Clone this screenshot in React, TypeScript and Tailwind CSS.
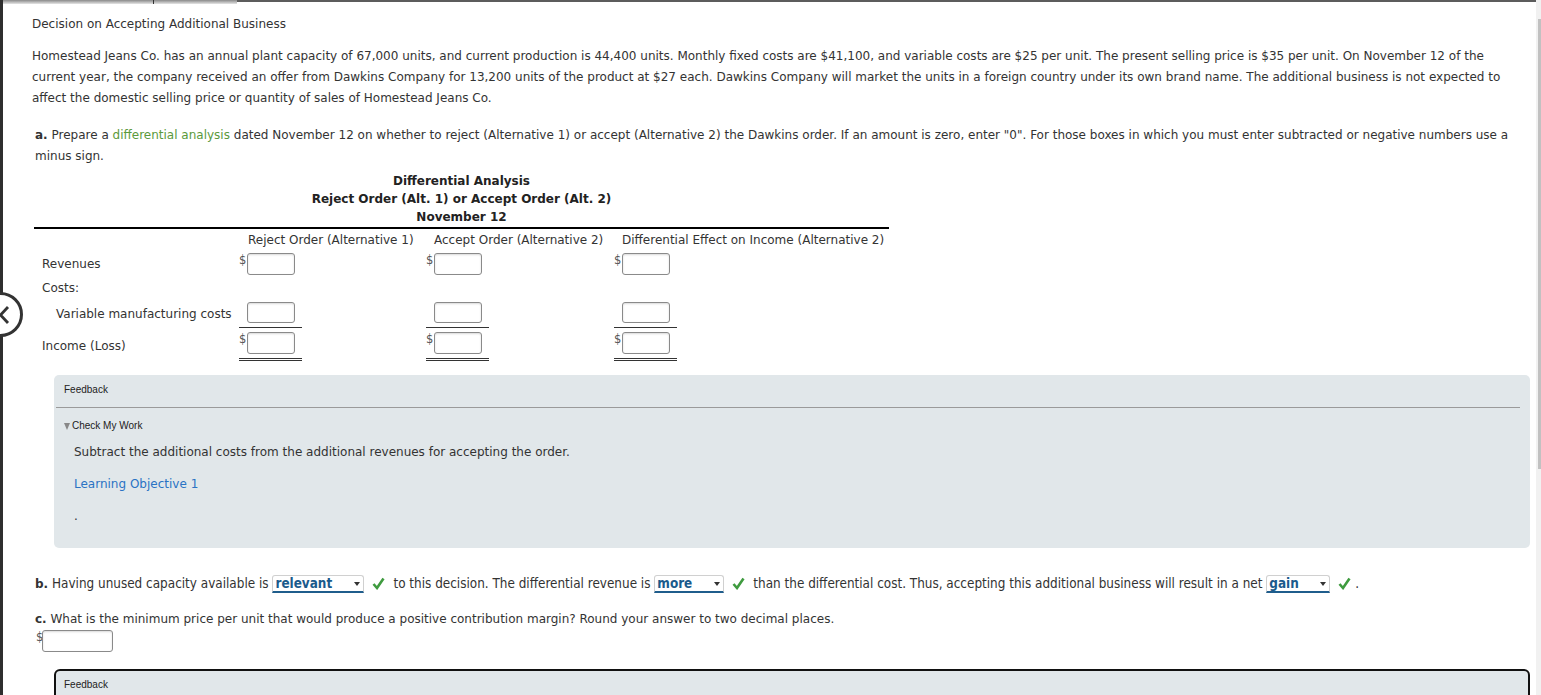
import React from "react";

const DollarInput = ({ w = "w-[48px]" }: { w?: string }) => (
  <div className="flex items-start">
    <span className="w-[8px] pt-[1px] text-[11.5px] leading-[12px] text-[#555]">$</span>
    <div className={`${w} h-[22px] rounded-[3px] border border-[#8a8a8a] bg-white shadow-[inset_0_1px_2px_rgba(0,0,0,0.15)]`} />
  </div>
);

const PlainInput = () => (
  <div className="flex items-start">
    <span className="w-[8px]" />
    <div className="h-[21px] w-[48px] rounded-[3px] border border-[#8a8a8a] bg-white shadow-[inset_0_1px_2px_rgba(0,0,0,0.15)]" />
  </div>
);

const Check = () => (
  <svg className="mx-[8px] inline-block align-[-2px]" width="13" height="13" viewBox="0 0 13 13">
    <path d="M1.5 7 L5 11 L11.5 1.5" fill="none" stroke="#3f9b3f" strokeWidth="2.6" />
  </svg>
);

const Dropdown = ({ label, w }: { label: string; w: string }) => (
  <span
    className={`relative inline-block ${w} h-[18px] rounded-t-[3px] border border-[#d0d0d0] border-b-2 border-b-[#1f5d8c] bg-white pl-[2px] align-baseline text-[13.4px] font-bold leading-[15px] text-[#1a5a8c]`}
  >
    {label}
    <span className="absolute right-[3px] top-[6px] h-0 w-0 border-x-[3px] border-t-[4px] border-x-transparent border-t-[#333]" />
  </span>
);

export default function App() {
  const valueCols = ["col1", "col2", "col3"];

  return (
    <div className="relative h-[695px] w-[1541px] overflow-hidden bg-white font-['DejaVu_Sans',sans-serif] text-[12px] text-[#333]">
      <div className="flex h-full">
        <div className="w-[3px] shrink-0 bg-[#2e2e2e]" />

        <div className="flex min-w-0 flex-1 flex-col">
          <div className="h-[2px] shrink-0 bg-[#5c5c5c]" />

          <main className="pl-[29px] pr-[6px]">
            {/* heading + problem text */}
            <h1 className="pt-[12px] leading-[21px]">Decision on Accepting Additional Business</h1>
            <p className="mt-[11px] leading-[21px]">
              Homestead Jeans Co. has an annual plant capacity of 67,000 units, and current production is 44,400 units. Monthly
              fixed costs are $41,100, and variable costs are $25 per unit. The present selling price is $35 per unit. On
              November 12 of the current year, the company received an offer from Dawkins Company for 13,200 units of the
              product at $27 each. Dawkins Company will market the units in a foreign country under its own brand name. The
              additional business is not expected to affect the domestic selling price or quantity of sales of Homestead
              Jeans Co.
            </p>
            <p className="mt-[16px] pl-[3px] leading-[21px]">
              <b>a.</b> Prepare a <span className="text-[#5b9a3c]">differential analysis</span> dated November 12 on whether
              to reject (Alternative 1) or accept (Alternative 2) the Dawkins order. If an amount is zero, enter "0". For
              those boxes in which you must enter subtracted or negative numbers use a minus sign.
            </p>

            {/* differential analysis table */}
            <div className="ml-[2px] mt-[5px] w-[855px]">
              <div className="text-center font-bold leading-[18px] text-[#222]">
                <div>Differential Analysis</div>
                <div>Reject Order (Alt. 1) or Accept Order (Alt. 2)</div>
                <div>November 12</div>
              </div>
              <div className="mt-[1px] border-t-2 border-black" />

              <div className="grid grid-cols-[205px_187px_188px_275px]">
                <div className="h-[22px]" />
                <div className="flex h-[22px] items-center whitespace-nowrap pl-[9px]">Reject Order (Alternative 1)</div>
                <div className="flex h-[22px] items-center whitespace-nowrap pl-[8px]">Accept Order (Alternative 2)</div>
                <div className="flex h-[22px] items-center whitespace-nowrap pl-[8px]">
                  Differential Effect on Income (Alternative 2)
                </div>

                <div className="flex h-[26px] items-center pl-[8px]">Revenues</div>
                {valueCols.map((c) => (
                  <div key={`rev-${c}`} className="pt-[2px]">
                    <DollarInput />
                  </div>
                ))}

                <div className="flex h-[22px] items-center pl-[8px]">Costs:</div>
                <div />
                <div />
                <div />

                <div className="flex h-[29px] items-center whitespace-nowrap pl-[22px]">Variable manufacturing costs</div>
                {valueCols.map((c) => (
                  <div key={`var-${c}`}>
                    <div className="w-[63px] border-b border-[#333] pb-[4px] pt-[3px]">
                      <PlainInput />
                    </div>
                  </div>
                ))}

                <div className="flex h-[33px] items-center pl-[8px] pt-[3px]">Income (Loss)</div>
                {valueCols.map((c) => (
                  <div key={`inc-${c}`}>
                    <div className="w-[63px] border-b-[3px] border-double border-[#333] pb-[4px] pt-[4px]">
                      <DollarInput />
                    </div>
                  </div>
                ))}
              </div>
            </div>

            {/* feedback panel */}
            <section className="ml-[22px] mt-[14px] h-[173px] rounded-[5px] bg-[#e1e7ea] px-[10px] pt-[9px]">
              <div className="font-['Liberation_Sans',sans-serif] text-[10px] leading-[12px] text-[#222]">Feedback</div>
              <div className="-ml-[8px] mt-[11px] border-t border-[#9a9a9a]" />
              <div className="mt-[12px] flex items-center font-['Liberation_Sans',sans-serif] text-[10px] leading-[12px] text-[#222]">
                <span className="mr-[2px] h-0 w-0 border-x-[3.5px] border-t-[7px] border-x-transparent border-t-[#888]" />
                Check My Work
              </div>
              <div className="pl-[10px]">
                <p className="mt-[10px] leading-[21px]">
                  Subtract the additional costs from the additional revenues for accepting the order.
                </p>
                <p className="mt-[11px] leading-[21px] text-[#2a73c4]">Learning Objective 1</p>
                <p className="mt-[11px] leading-[21px]">.</p>
              </div>
            </section>

            {/* part b */}
            <p className="mt-[25px] whitespace-nowrap pl-[3px] font-['DejaVu_Sans_Condensed','DejaVu_Sans',sans-serif] text-[13.4px] leading-[21px]">
              <b className="font-['DejaVu_Sans',sans-serif] text-[12px]">b.</b> Having unused capacity available is{" "}
              <Dropdown label="relevant" w="w-[92px]" />
              <Check />
              to this decision. The differential revenue is <Dropdown label="more" w="w-[70px]" />
              <Check />
              than the differential cost. Thus, accepting this additional business will result in a net{" "}
              <Dropdown label="gain" w="w-[64px]" />
              <Check />
              <span className="-ml-[4px]">.</span>
            </p>

            {/* part c */}
            <p className="mt-[14px] pl-[3px] leading-[21px]">
              <b>c.</b> What is the minimum price per unit that would produce a positive contribution margin? Round your
              answer to two decimal places.
            </p>
            <div className="flex items-start pl-[4px]">
              <span className="w-[6px] pt-[1px] text-[11.5px] leading-[12px] text-[#555]">$</span>
              <div className="h-[22px] w-[71px] rounded-[3px] border border-[#8a8a8a] bg-white shadow-[inset_0_1px_2px_rgba(0,0,0,0.15)]" />
            </div>

            <section className="ml-[22px] mt-[17px] h-[60px] rounded-[6px] border-2 border-[#111] bg-[#e1e7ea] px-[8px] pt-[8px]">
              <div className="font-['Liberation_Sans',sans-serif] text-[10px] leading-[12px] text-[#222]">Feedback</div>
            </section>
          </main>
        </div>

        {/* scrollbar */}
        <div className="w-[5px] shrink-0 bg-[#f1f1f1]">
          <div className="ml-[2px] mt-[19px] h-[450px] bg-[#c1c1c1]" />
        </div>
      </div>

      {/* top tab shading */}
      <div className="absolute left-[3px] top-0 h-[4px] w-[234px] bg-gradient-to-b from-[#8a8a8a] to-[#e6e6e6]">
        <div className="absolute left-[150px] top-0 h-[4px] w-[1px] bg-[#333]" />
      </div>

      {/* previous-question circle */}
      <div className="absolute left-[-22px] top-[292px] h-[45px] w-[45px] rounded-full border-[3px] border-[#333] bg-white" />
      <svg className="absolute left-0 top-[305px]" width="10" height="20" viewBox="0 0 10 20">
        <polyline points="8,2 0.5,10 8,18" fill="none" stroke="#333" strokeWidth="2.8" />
      </svg>
    </div>
  );
}
